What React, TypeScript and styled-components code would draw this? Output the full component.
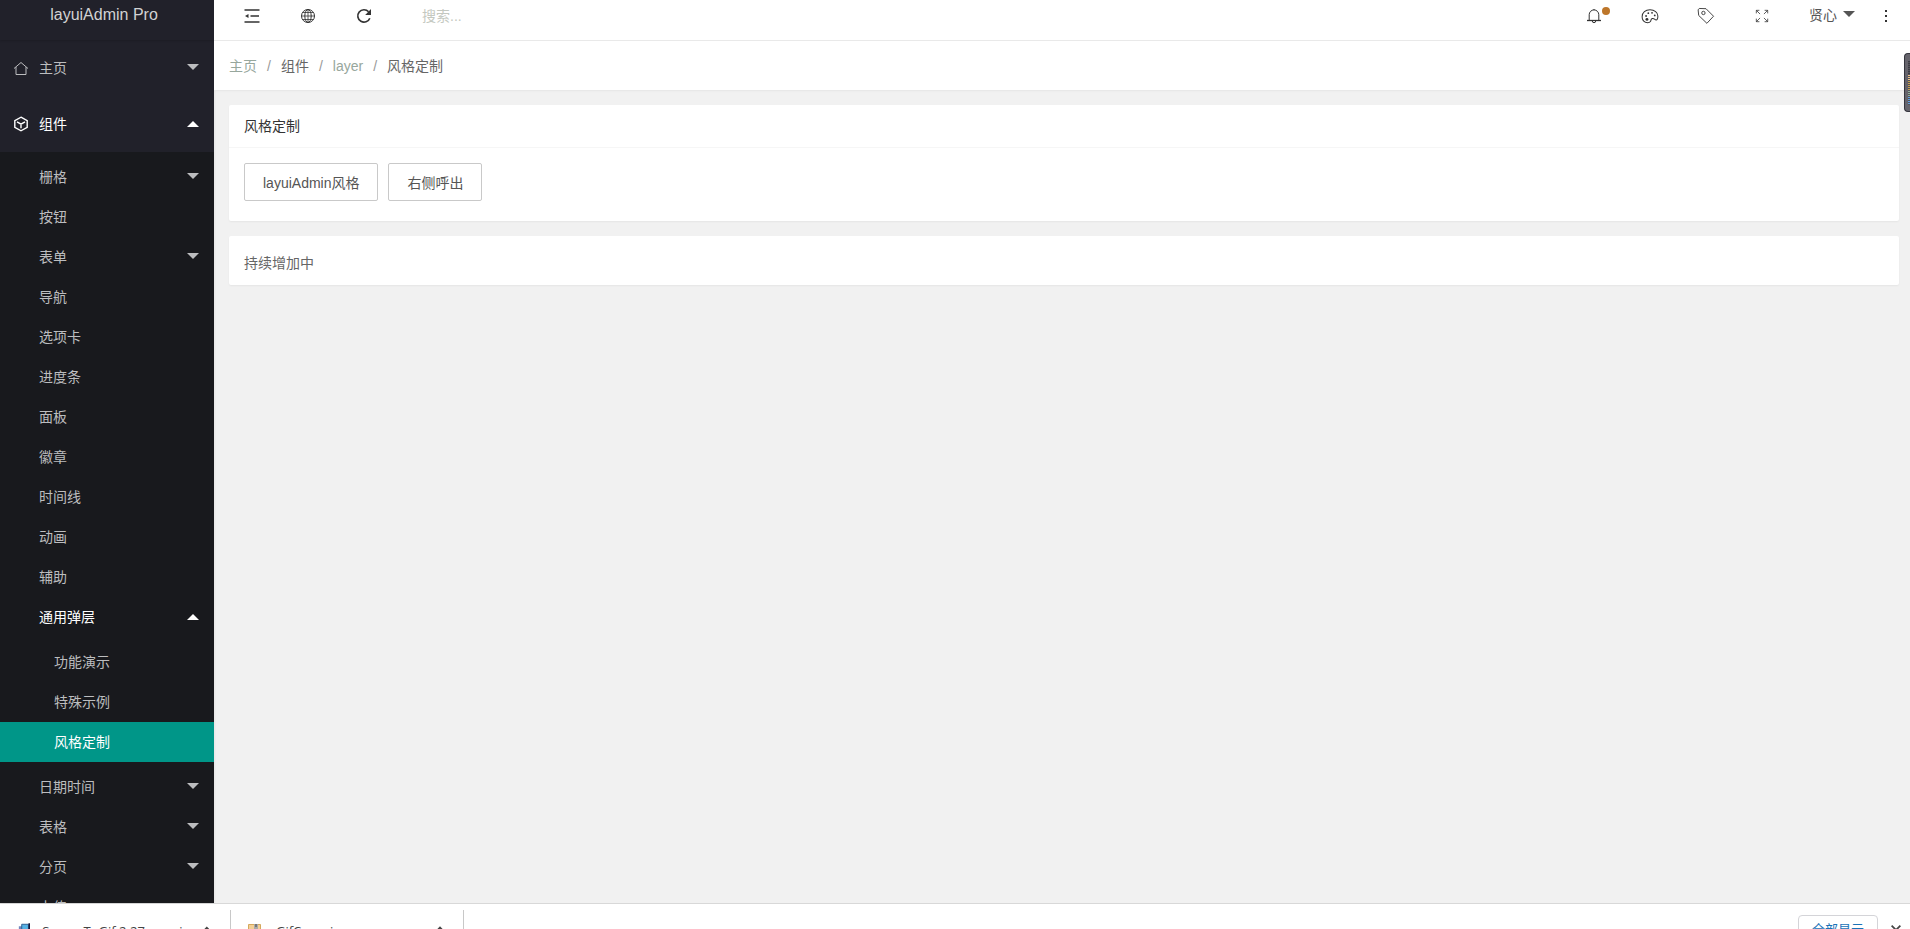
import React from "react";
import styled, { createGlobalStyle, css } from "styled-components";

const GlobalStyle = createGlobalStyle`
  *, *::before, *::after { box-sizing: border-box; }
  body {
    margin: 0;
    overflow: hidden;
    background: #f1f1f1;
    color: #666;
    font: 14px/24px "Liberation Sans", "Noto Sans CJK SC", sans-serif;
  }
  button, input { font: inherit; color: inherit; }
  a { color: inherit; text-decoration: none; }
  ul, ol { margin: 0; padding: 0; list-style: none; }
`;

const Screen = styled.div`
  display: flex;
  flex-direction: column;
  height: 100vh;
`;

const Admin = styled.div`
  display: flex;
  flex: 1;
  min-height: 0;
  position: relative;
`;

const Sidebar = styled.aside`
  width: 214px;
  flex: none;
  overflow: hidden;
  background: #21212a;
  box-shadow: 1px 0 2px rgba(0, 0, 0, 0.05);
`;

const Brand = styled.a`
  display: block;
  height: 40px;
  padding: 3px 6px 0 0;
  color: #d2d2d3;
  font-size: 16px;
  text-align: center;
  box-shadow: 0 1px 2px rgba(0, 0, 0, 0.15);
`;

const NavLink = styled.a<{ $level: 1 | 2 | 3; $open?: boolean; $current?: boolean }>`
  display: flex;
  align-items: center;
  height: ${(p) => (p.$level === 1 ? 56 : 40)}px;
  padding: 0 15px 0 ${(p) => ({ 1: 13, 2: 39, 3: 54 })[p.$level]}px;
  color: ${(p) => (p.$open || p.$current ? "#fff" : "#bcbdbf")};
  ${(p) => p.$current && css`background: #009688;`}

  svg { margin-right: 10px; }
  span { flex: 1; }
`;

const SubList = styled.ul`
  padding: 5px 0;
  background: #18191d;

  & & { background: none; }
`;

const Arrow = styled.i<{ $up?: boolean }>`
  border: 6px solid transparent;
  ${(p) =>
    p.$up
      ? css`border-bottom-color: currentColor; border-top: 0;`
      : css`border-top-color: currentColor; border-bottom: 0; margin-bottom: 3px;`}
`;

const Main = styled.main`
  flex: 1;
  min-width: 0;
`;

const Header = styled.header`
  display: flex;
  justify-content: space-between;
  height: 41px;
  border-bottom: 1px solid #e9e9e9;
  background: #fff;
`;

const Tools = styled.div<{ $left?: boolean }>`
  display: flex;
  align-items: center;
  height: 32px;
  padding-left: ${(p) => (p.$left ? 10 : 0)}px;
  color: #333;
`;

const ToolButton = styled.button<{ $narrow?: boolean }>`
  display: flex;
  align-items: center;
  justify-content: center;
  width: ${(p) => (p.$narrow ? 48 : 56)}px;
  height: 32px;
  padding: 0;
  border: 0;
  background: none;
  position: relative;
`;

const Dot = styled.span`
  position: absolute;
  top: 7px;
  right: 12px;
  width: 8px;
  height: 8px;
  border-radius: 50%;
  background: #bd762a;
`;

const Search = styled.input`
  width: 180px;
  margin-left: 20px;
  padding: 0 10px;
  border: 0;
  outline: 0;
  background: none;
  &::placeholder { color: #c4c8c0; opacity: 1; }
`;

const UserButton = styled.button`
  display: flex;
  align-items: center;
  gap: 6px;
  width: 72px;
  height: 32px;
  padding: 0 0 2px 19px;
  border: 0;
  background: none;
  white-space: nowrap;
  color: #555;
`;

const Crumbs = styled.ol`
  display: flex;
  align-items: center;
  height: 50px;
  padding: 0 15px;
  border-bottom: 1px solid #e8e8e8;
  background: #fff;
  box-shadow: 0 1px 2px rgba(0, 0, 0, 0.02);

  li + li::before { content: "/"; margin: 0 10px; color: #999; }
`;

const CrumbLink = styled.a`
  color: #97a79d;
`;

const Cards = styled.div`
  display: grid;
  gap: 15px;
  padding: 14px 11px 14px 15px;
`;

const Card = styled.section`
  border-radius: 2px;
  background: #fff;
  box-shadow: 0 1px 2px rgba(0, 0, 0, 0.05);
`;

const CardTitle = styled.h2`
  margin: 0;
  height: 43px;
  padding: 0 15px;
  border-bottom: 1px solid #f6f6f6;
  color: #333;
  font-size: 14px;
  font-weight: 400;
  line-height: 42px;
`;

const ButtonRow = styled.div`
  display: flex;
  gap: 10px;
  padding: 15px 15px 20px;
`;

const OutlineButton = styled.button`
  height: 38px;
  padding: 2px 18px 0;
  border: 1px solid #c9c9c9;
  border-radius: 2px;
  background: #fff;
  color: #555;
`;

const CardText = styled.p`
  margin: 0;
  padding: 15px 15px 10px;
`;

const EdgeWidget = styled.div`
  position: absolute;
  top: 53px;
  right: 0;
  width: 6px;
  height: 59px;
  padding: 7px 0 6px 3px;
  border: 1px solid #35353d;
  border-right: 0;
  border-radius: 4px 0 0 4px;
  background: #66646c;

  &::before {
    content: "";
    display: block;
    height: 100%;
    background:
      repeating-linear-gradient(transparent 0 1px, #55535a 1px 2px),
      linear-gradient(#3c3c44 0 30%, #f0c48a 30% 45%, #c9a04e 45% 68%, #8fae9c 68% 82%, #5f9fe0 82%);
  }
`;

const Shelf = styled.footer`
  display: flex;
  flex: none;
  align-items: flex-start;
  height: 26px;
  overflow: hidden;
  border-top: 1px solid #d8d8d8;
  background: #fff;
  color: #444;
`;

const Download = styled.button`
  display: flex;
  align-items: center;
  flex: none;
  gap: 12px;
  width: 233px;
  height: 40px;
  margin-top: 6px;
  padding: 2px 18px 0 17px;
  border: 0;
  border-right: 1px solid #c8c8c8;
  background: none;
  font-family: "Open Sans", sans-serif;
  font-size: 13px;
  text-align: left;

  &:first-child { width: 231px; padding-left: 15px; }
  span { flex: 1; }
`;

const ShelfActions = styled.div`
  display: flex;
  align-items: center;
  gap: 11px;
  margin: 11px 7px 0 auto;
`;

const ShowAll = styled.button`
  width: 80px;
  height: 30px;
  padding: 0;
  border: 1px solid #d4d4d8;
  border-radius: 4px;
  background: #fff;
  color: #1a73b8;
  font-size: 13px;
`;

const CloseButton = styled.button`
  display: flex;
  padding: 0;
  border: 0;
  background: none;
`;

type IconProps = { size?: number; stroke?: number; children: React.ReactNode };

const Icon = ({ size = 16, stroke = 1, children }: IconProps) => (
  <svg width={size} height={size} viewBox="0 0 16 16" fill="none" stroke="currentColor" strokeWidth={stroke} aria-hidden="true">
    {children}
  </svg>
);

const HomeIcon = () => (
  <Icon><path d="M1 8.500 8 2.500l7 6M3 7v7.500h10V7" /></Icon>
);
const CubeIcon = () => (
  <Icon stroke={1.4}><path d="M8 1.200 14.200 4.600v6.800L8 14.800 1.800 11.400V4.600ZM4 5.800 8 8.200 12 5.800M8 8.200v4.100" /></Icon>
);
const CollapseIcon = () => (
  <Icon stroke={1.4}><path d="M.5 2h15M6.500 8h8.500M.5 14h15" /><path d="M4.500 6v4L1 8Z" fill="currentColor" stroke="none" /></Icon>
);
const GlobeIcon = () => (
  <Icon><circle cx="8" cy="8" r="6.500" /><ellipse cx="8" cy="8" rx="3.200" ry="6.500" /><path d="M8 1.500v13M1.500 8h13M2.700 4.500h10.600M2.700 11.500h10.600" strokeWidth=".8" /></Icon>
);
const RefreshIcon = () => (
  <Icon stroke={1.700}><path d="M13.800 10.200A6.200 6.200 0 1 1 12.600 3.800" /><path d="M15 1v6H9.200Z" fill="currentColor" stroke="none" /></Icon>
);
const BellIcon = () => (
  <Icon><path d="M1 12.500h14" strokeWidth="1.300" /><path d="M3.200 12.500V6.700a4.800 4.800 0 0 1 9.600 0v5.800M8 1v1M6.300 13a1.700 1.700 0 0 0 3.400 0" /></Icon>
);
const PaletteIcon = () => (
  <Icon size={18} stroke={0.9}>
    <path d="M4 13.600C1.800 12.600 1 10.800 1 8.700 1 5 4 2.500 8 2.500s7 2.300 7 5.500c0 2-.5 3.500-1.600 3.500-1.300 0-1.800-1.800-3.400-1.200s-.9 1.700-1.600 2.600-2.800 1.200-4.400.7Z" />
    <g fill="currentColor" stroke="none"><circle cx="4.500" cy="8" r=".8" /><circle cx="6.500" cy="5.500" r=".8" /><circle cx="9.800" cy="5.200" r=".8" /><circle cx="12.200" cy="7.500" r=".8" /><circle cx="5.300" cy="11" r="1.300" /></g>
  </Icon>
);
const TagIcon = () => (
  <Icon size={18} stroke={0.8}><path d="M1 2.500 2 1.300l6 .2 6.700 6.700-5.900 6.300L1.500 7.500Z" /><circle cx="5.700" cy="5.300" r="1.500" /></Icon>
);
const ExpandIcon = () => (
  <Icon size={14}><path d="M1.500 5V1.500H5M1.500 1.500l4.300 4.300M11 1.500h3.500V5M14.500 1.500l-4.300 4.300M1.500 11v3.500H5M1.500 14.500l4.300-4.300M14.500 11v3.500H11M14.500 14.500l-4.300-4.300" strokeWidth=".9" /></Icon>
);
const MoreIcon = () => (
  <Icon><path d="M7 2h2v2H7ZM7 7h2v2H7ZM7 12h2v2H7Z" fill="#333" stroke="none" /></Icon>
);
const ChevronUpIcon = () => (
  <Icon size={10} stroke={2}><path d="m2 8 6-6 6 6" /></Icon>
);
const AppFileIcon = () => (
  <Icon>
    <path d="M4 3h4v12H4ZM0 7h4v8H0Z" fill="#7186bd" stroke="none" />
    <path d="M7 1h7v12H7Z" fill="#56b2e4" stroke="#2b5f93" />
    <path d="M15 0v15" stroke="#151a3c" strokeWidth="2" />
  </Icon>
);
const ZipFileIcon = () => (
  <Icon><path d="M.5 1.500h12v14H.5Z" fill="#f3cf95" stroke="#d5a85c" /><path d="M6 1h4v6H6Z" fill="#aaa" stroke="none" /><path d="M8 1v3" stroke="#444" /></Icon>
);

type Item = { text: string; arrow?: boolean; children?: string[] };

const components: Item[] = [
  { text: "栅格", arrow: true },
  { text: "按钮" },
  { text: "表单", arrow: true },
  { text: "导航" },
  { text: "选项卡" },
  { text: "进度条" },
  { text: "面板" },
  { text: "徽章" },
  { text: "时间线" },
  { text: "动画" },
  { text: "辅助" },
  { text: "通用弹层", arrow: true, children: ["功能演示", "特殊示例", "风格定制"] },
  { text: "日期时间", arrow: true },
  { text: "表格", arrow: true },
  { text: "分页", arrow: true },
  { text: "上传", arrow: true },
];

export default function App() {
  return (
    <Screen>
      <GlobalStyle />
      <Admin>
        <Sidebar>
          <Brand href="#">layuiAdmin Pro</Brand>
          <nav>
            <NavLink href="#" $level={1}><HomeIcon /><span>主页</span><Arrow /></NavLink>
            <NavLink href="#" $level={1} $open><CubeIcon /><span>组件</span><Arrow $up /></NavLink>
            <SubList>
              {components.map(({ text, arrow, children }) => (
                <li key={text}>
                  <NavLink href="#" $level={2} $open={!!children}>
                    <span>{text}</span>
                    {arrow && <Arrow $up={!!children} />}
                  </NavLink>
                  {children && (
                    <SubList>
                      {children.map((name) => (
                        <li key={name}>
                          <NavLink href="#" $level={3} $current={name === "风格定制"}><span>{name}</span></NavLink>
                        </li>
                      ))}
                    </SubList>
                  )}
                </li>
              ))}
            </SubList>
          </nav>
        </Sidebar>
        <Main>
          <Header>
            <Tools $left>
              <ToolButton aria-label="侧边伸缩"><CollapseIcon /></ToolButton>
              <ToolButton aria-label="前台"><GlobeIcon /></ToolButton>
              <ToolButton aria-label="刷新"><RefreshIcon /></ToolButton>
              <Search aria-label="搜索" placeholder="搜索..." />
            </Tools>
            <Tools>
              <ToolButton aria-label="消息"><BellIcon /><Dot /></ToolButton>
              <ToolButton aria-label="主题"><PaletteIcon /></ToolButton>
              <ToolButton aria-label="便签"><TagIcon /></ToolButton>
              <ToolButton aria-label="全屏"><ExpandIcon /></ToolButton>
              <UserButton>贤心<Arrow /></UserButton>
              <ToolButton $narrow aria-label="更多"><MoreIcon /></ToolButton>
            </Tools>
          </Header>
          <Crumbs>
            <li><CrumbLink href="#">主页</CrumbLink></li>
            <li>组件</li>
            <li><CrumbLink href="#">layer</CrumbLink></li>
            <li>风格定制</li>
          </Crumbs>
          <Cards>
            <Card>
              <CardTitle>风格定制</CardTitle>
              <ButtonRow>
                <OutlineButton>layuiAdmin风格</OutlineButton>
                <OutlineButton>右侧呼出</OutlineButton>
              </ButtonRow>
            </Card>
            <Card><CardText>持续增加中</CardText></Card>
          </Cards>
        </Main>
        <EdgeWidget />
      </Admin>
      <Shelf>
        <Download>
          <AppFileIcon />
          <span>ScreenToGif.2.27.exe.zip</span>
          <ChevronUpIcon />
        </Download>
        <Download>
          <ZipFileIcon />
          <span>GifCam.zip</span>
          <ChevronUpIcon />
        </Download>
        <ShelfActions>
          <ShowAll>全部显示</ShowAll>
          <CloseButton aria-label="关闭"><Icon size={14} stroke={2}><path d="m3 3 10 10M13 3 3 13" /></Icon></CloseButton>
        </ShelfActions>
      </Shelf>
    </Screen>
  );
}
